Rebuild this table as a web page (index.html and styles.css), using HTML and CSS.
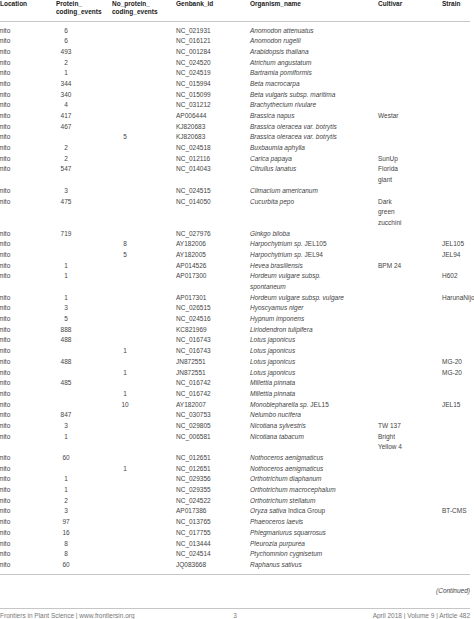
FILE: index.html
```html
<!DOCTYPE html>
<html>
<head>
<meta charset="utf-8">
<link rel="stylesheet" href="styles.css">
</head>
<body>
<div class="page">
<table class="data">
<colgroup>
<col class="c-loc"><col class="c-pro"><col class="c-nop"><col class="c-gen"><col class="c-org"><col class="c-cul"><col class="c-str">
</colgroup>
<thead>
<tr><th>Location</th><th>Protein_<br>coding_events</th><th>No_protein_<br>coding_events</th><th>Genbank_id</th><th>Organism_name</th><th>Cultivar</th><th>Strain</th></tr>
</thead>
<tbody>
<tr class="first"><td class="loc">mito</td><td><span class="n1">6</span></td><td></td><td>NC_021931</td><td class="org">Anomodon attenuatus</td><td></td><td></td></tr>
<tr><td class="loc">mito</td><td><span class="n1">6</span></td><td></td><td>NC_016121</td><td class="org">Anomodon rugelii</td><td></td><td></td></tr>
<tr><td class="loc">mito</td><td><span class="n1">493</span></td><td></td><td>NC_001284</td><td class="org">Arabidopsis thaliana</td><td></td><td></td></tr>
<tr><td class="loc">mito</td><td><span class="n1">2</span></td><td></td><td>NC_024520</td><td class="org">Atrichum angustatum</td><td></td><td></td></tr>
<tr><td class="loc">mito</td><td><span class="n1">1</span></td><td></td><td>NC_024519</td><td class="org">Bartramia pomiformis</td><td></td><td></td></tr>
<tr><td class="loc">mito</td><td><span class="n1">344</span></td><td></td><td>NC_015994</td><td class="org">Beta macrocarpa</td><td></td><td></td></tr>
<tr><td class="loc">mito</td><td><span class="n1">340</span></td><td></td><td>NC_015099</td><td class="org">Beta vulgaris subsp. maritima</td><td></td><td></td></tr>
<tr><td class="loc">mito</td><td><span class="n1">4</span></td><td></td><td>NC_031212</td><td class="org">Brachythecium rivulare</td><td></td><td></td></tr>
<tr><td class="loc">mito</td><td><span class="n1">417</span></td><td></td><td>AP006444</td><td class="org">Brassica napus</td><td>Westar</td><td></td></tr>
<tr><td class="loc">mito</td><td><span class="n1">467</span></td><td></td><td>KJ820683</td><td class="org">Brassica oleracea var. botrytis</td><td></td><td></td></tr>
<tr><td class="loc">mito</td><td></td><td><span class="n2">5</span></td><td>KJ820683</td><td class="org">Brassica oleracea var. botrytis</td><td></td><td></td></tr>
<tr><td class="loc">mito</td><td><span class="n1">2</span></td><td></td><td>NC_024518</td><td class="org">Buxbaumia aphylla</td><td></td><td></td></tr>
<tr><td class="loc">mito</td><td><span class="n1">2</span></td><td></td><td>NC_012116</td><td class="org">Carica papaya</td><td>SunUp</td><td></td></tr>
<tr><td class="loc">mito</td><td><span class="n1">547</span></td><td></td><td>NC_014043</td><td class="org">Citrullus lanatus</td><td>Florida<br>giant</td><td></td></tr>
<tr><td class="loc">mito</td><td><span class="n1">3</span></td><td></td><td>NC_024515</td><td class="org">Climacium americanum</td><td></td><td></td></tr>
<tr><td class="loc">mito</td><td><span class="n1">475</span></td><td></td><td>NC_014050</td><td class="org">Cucurbita pepo</td><td>Dark<br>green<br>zucchini</td><td></td></tr>
<tr><td class="loc">mito</td><td><span class="n1">719</span></td><td></td><td>NC_027976</td><td class="org">Ginkgo biloba</td><td></td><td></td></tr>
<tr><td class="loc">mito</td><td></td><td><span class="n2">8</span></td><td>AY182006</td><td class="org">Harpochytrium sp. <span class="up">JEL105</span></td><td></td><td>JEL105</td></tr>
<tr><td class="loc">mito</td><td></td><td><span class="n2">5</span></td><td>AY182005</td><td class="org">Harpochytrium sp. <span class="up">JEL94</span></td><td></td><td>JEL94</td></tr>
<tr><td class="loc">mito</td><td><span class="n1">1</span></td><td></td><td>AP014526</td><td class="org">Hevea brasiliensis</td><td>BPM 24</td><td></td></tr>
<tr><td class="loc">mito</td><td><span class="n1">1</span></td><td></td><td>AP017300</td><td class="org">Hordeum vulgare subsp.<br>spontaneum</td><td></td><td>H602</td></tr>
<tr><td class="loc">mito</td><td><span class="n1">1</span></td><td></td><td>AP017301</td><td class="org">Hordeum vulgare subsp. vulgare</td><td></td><td>HarunaNijo</td></tr>
<tr><td class="loc">mito</td><td><span class="n1">3</span></td><td></td><td>NC_026515</td><td class="org">Hyoscyamus niger</td><td></td><td></td></tr>
<tr><td class="loc">mito</td><td><span class="n1">5</span></td><td></td><td>NC_024516</td><td class="org">Hypnum imponens</td><td></td><td></td></tr>
<tr><td class="loc">mito</td><td><span class="n1">888</span></td><td></td><td>KC821969</td><td class="org">Liriodendron tulipifera</td><td></td><td></td></tr>
<tr><td class="loc">mito</td><td><span class="n1">488</span></td><td></td><td>NC_016743</td><td class="org">Lotus japonicus</td><td></td><td></td></tr>
<tr><td class="loc">mito</td><td></td><td><span class="n2">1</span></td><td>NC_016743</td><td class="org">Lotus japonicus</td><td></td><td></td></tr>
<tr><td class="loc">mito</td><td><span class="n1">488</span></td><td></td><td>JN872551</td><td class="org">Lotus japonicus</td><td></td><td>MG-20</td></tr>
<tr><td class="loc">mito</td><td></td><td><span class="n2">1</span></td><td>JN872551</td><td class="org">Lotus japonicus</td><td></td><td>MG-20</td></tr>
<tr><td class="loc">mito</td><td><span class="n1">485</span></td><td></td><td>NC_016742</td><td class="org">Millettia pinnata</td><td></td><td></td></tr>
<tr><td class="loc">mito</td><td></td><td><span class="n2">1</span></td><td>NC_016742</td><td class="org">Millettia pinnata</td><td></td><td></td></tr>
<tr><td class="loc">mito</td><td></td><td><span class="n2">10</span></td><td>AY182007</td><td class="org">Monoblepharella sp. <span class="up">JEL15</span></td><td></td><td>JEL15</td></tr>
<tr><td class="loc">mito</td><td><span class="n1">847</span></td><td></td><td>NC_030753</td><td class="org">Nelumbo nucifera</td><td></td><td></td></tr>
<tr><td class="loc">mito</td><td><span class="n1">3</span></td><td></td><td>NC_029805</td><td class="org">Nicotiana sylvestris</td><td>TW 137</td><td></td></tr>
<tr><td class="loc">mito</td><td><span class="n1">1</span></td><td></td><td>NC_006581</td><td class="org">Nicotiana tabacum</td><td>Bright<br>Yellow 4</td><td></td></tr>
<tr><td class="loc">mito</td><td><span class="n1">60</span></td><td></td><td>NC_012651</td><td class="org">Nothoceros aenigmaticus</td><td></td><td></td></tr>
<tr><td class="loc">mito</td><td></td><td><span class="n2">1</span></td><td>NC_012651</td><td class="org">Nothoceros aenigmaticus</td><td></td><td></td></tr>
<tr><td class="loc">mito</td><td><span class="n1">1</span></td><td></td><td>NC_029356</td><td class="org">Orthotrichum diaphanum</td><td></td><td></td></tr>
<tr><td class="loc">mito</td><td><span class="n1">1</span></td><td></td><td>NC_029355</td><td class="org">Orthotrichum macrocephalum</td><td></td><td></td></tr>
<tr><td class="loc">mito</td><td><span class="n1">2</span></td><td></td><td>NC_024522</td><td class="org">Orthotrichum stellatum</td><td></td><td></td></tr>
<tr><td class="loc">mito</td><td><span class="n1">3</span></td><td></td><td>AP017386</td><td class="org">Oryza sativa <span class="up">Indica Group</span></td><td></td><td>BT-CMS</td></tr>
<tr><td class="loc">mito</td><td><span class="n1">97</span></td><td></td><td>NC_013765</td><td class="org">Phaeoceros laevis</td><td></td><td></td></tr>
<tr><td class="loc">mito</td><td><span class="n1">16</span></td><td></td><td>NC_017755</td><td class="org">Phlegmariurus squarrosus</td><td></td><td></td></tr>
<tr><td class="loc">mito</td><td><span class="n1">8</span></td><td></td><td>NC_013444</td><td class="org">Pleurozia purpurea</td><td></td><td></td></tr>
<tr><td class="loc">mito</td><td><span class="n1">8</span></td><td></td><td>NC_024514</td><td class="org">Ptychomnion cygnisetum</td><td></td><td></td></tr>
<tr class="last"><td class="loc">mito</td><td><span class="n1">60</span></td><td></td><td>JQ083668</td><td class="org">Raphanus sativus</td><td></td><td></td></tr>
</tbody>
</table>
<div class="continued">(Continued)</div>
<div class="footer">
<span class="f-left">Frontiers in Plant Science | www.frontiersin.org</span>
<span class="f-mid">3</span>
<span class="f-right">April 2018 | Volume 9 | Article 482</span>
</div>
</div>
</body>
</html>
```

FILE: styles.css
```css
html, body {
  margin: 0;
  padding: 0;
  background: #ffffff;
}
body {
  width: 474px;
  height: 619px;
  overflow: hidden;
  font-family: "Liberation Sans", Arial, sans-serif;
  color: #444;
}
.page {
  width: 470px;
}
.data {
  width: 470px;
  table-layout: fixed;
  border-collapse: collapse;
  border-spacing: 0;
  font-size: 6.5px;
}
.c-loc { width: 56px; }
.c-pro { width: 56px; }
.c-nop { width: 64px; }
.c-gen { width: 74px; }
.c-org { width: 128px; }
.c-cul { width: 64px; }
.c-str { width: 28px; }

.data th {
  text-align: left;
  vertical-align: top;
  font-weight: bold;
  color: #222;
  line-height: 8px;
  padding: 0 0 5px 0;
  border-bottom: 1px solid #c6c6c6;
  white-space: nowrap;
  overflow: visible;
}
.data td {
  padding: 0;
  vertical-align: top;
  line-height: 10.68px;
  white-space: nowrap;
  overflow: visible;
}
.data tr.first td { padding-top: 3.5px; }
.data tr.last td {
  padding-bottom: 3px;
  border-bottom: 1px solid #c6c6c6;
}
.data td.loc { text-indent: -2px; }
.data td.org { font-style: italic; }
.data td.org .up { font-style: normal; }
.n1 {
  display: inline-block;
  width: 20px;
  text-align: center;
}
.n2 {
  display: inline-block;
  width: 26px;
  text-align: center;
}
.continued {
  margin-top: 11px;
  font-size: 6.5px;
  line-height: 10px;
  font-style: italic;
  text-align: right;
  color: #444;
}
.footer {
  margin-top: 12px;
  border-top: 1px solid #c6c6c6;
  padding-top: 2px;
  display: flex;
  justify-content: space-between;
  font-size: 6.5px;
  line-height: 10px;
  color: #777;
}
.f-left { width: 200px; }
.f-mid { width: 70px; text-align: center; }
.f-right { width: 200px; text-align: right; }
```
